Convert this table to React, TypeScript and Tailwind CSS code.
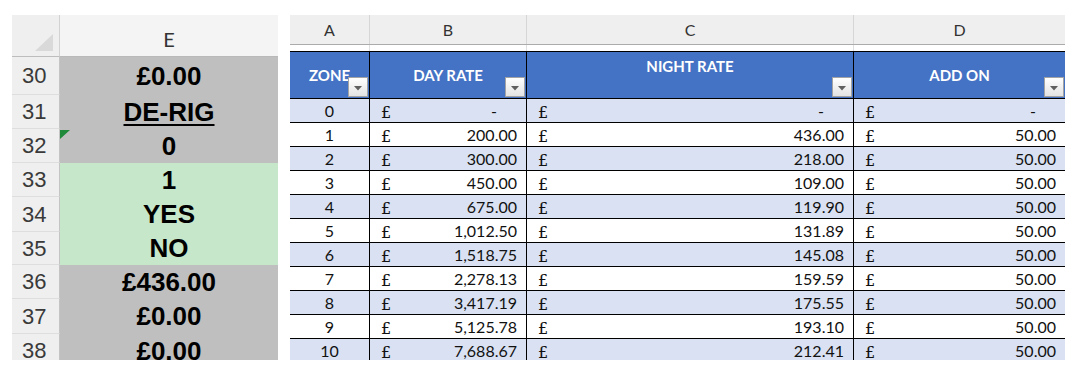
import React from 'react';

const leftRows = [
  { n: 30, text: '£0.00', bg: 'bg-[#bfbfbf]', h: 'h-[38px]' },
  { n: 31, text: 'DE-RIG', bg: 'bg-[#bfbfbf]', h: 'h-[34px]', underline: true },
  { n: 32, text: '0', bg: 'bg-[#bfbfbf]', h: 'h-[34px]', flag: true },
  { n: 33, text: '1', bg: 'bg-[#c6e7c9]', h: 'h-[34px]' },
  { n: 34, text: 'YES', bg: 'bg-[#c6e7c9]', h: 'h-[35px]' },
  { n: 35, text: 'NO', bg: 'bg-[#c6e7c9]', h: 'h-[33px]' },
  { n: 36, text: '£436.00', bg: 'bg-[#bfbfbf]', h: 'h-[34px]' },
  { n: 37, text: '£0.00', bg: 'bg-[#bfbfbf]', h: 'h-[35px]' },
  { n: 38, text: '£0.00', bg: 'bg-[#bfbfbf]', h: 'h-[34px]' },
];

const rates: [number, string | null, string | null, string | null][] = [
  [0, null, null, null],
  [1, '200.00', '436.00', '50.00'],
  [2, '300.00', '218.00', '50.00'],
  [3, '450.00', '109.00', '50.00'],
  [4, '675.00', '119.90', '50.00'],
  [5, '1,012.50', '131.89', '50.00'],
  [6, '1,518.75', '145.08', '50.00'],
  [7, '2,278.13', '159.59', '50.00'],
  [8, '3,417.19', '175.55', '50.00'],
  [9, '5,125.78', '193.10', '50.00'],
  [10, '7,688.67', '212.41', '50.00'],
];

function FilterButton() {
  return (
    <div className="absolute right-[1px] bottom-[1px] w-[20px] h-[20px] border border-[#a3a3a3] bg-gradient-to-b from-white to-[#e3e3e3] flex items-center justify-center">
      <svg width="8" height="5" viewBox="0 0 8 5" className="mt-[2px]">
        <path d="M0 0 L8 0 L4 4.5 Z" fill="#5f5f5f" />
      </svg>
    </div>
  );
}

function Money({ value, w }: { value: string | null; w: string }) {
  return (
    <div className={`${w} border-l border-black h-full flex items-center justify-between pl-[11px] pr-[9px]`}>
      <span className="font-['DejaVu_Serif',serif] text-[16px] leading-none pt-[4px]">£</span>
      {value === null ? <span className="pr-[20px]">-</span> : <span>{value}</span>}
    </div>
  );
}

function LeftSheet() {
  return (
    <div className="w-[266px] h-[345px] overflow-hidden flex flex-col">
      <div className="flex h-[42px] shrink-0">
        <div className="w-[48px] bg-[#efefef] border-r border-[#d2d2d2] border-b border-b-[#bdbdbd] flex items-end justify-end pr-[6px] pb-[5px]">
          <svg width="18" height="17" viewBox="0 0 18 17">
            <path d="M18 0 L18 17 L0 17 Z" fill="#d9d9d9" />
          </svg>
        </div>
        <div className="flex-1 bg-[#f4f4f4] border-b border-[#b9b9b9] flex items-center justify-center pt-[6px] text-[20px] text-[#333] font-['Lato',sans-serif]">
          E
        </div>
      </div>
      {leftRows.map((r) => (
        <div key={r.n} className={`flex ${r.h} shrink-0`}>
          <div className="w-[48px] bg-[#efefef] border-r border-[#c4c4c4] border-b border-b-[#dedede] flex items-center pl-[10px] text-[22px] text-[#3a3a3a] font-['Liberation_Sans',sans-serif]">
            {r.n}
          </div>
          <div
            className={`relative flex-1 ${r.bg} flex items-center justify-center text-[26px] font-bold text-black font-['Liberation_Sans',sans-serif]`}
          >
            {r.flag && (
              <svg width="10" height="9" viewBox="0 0 10 9" className="absolute left-0 top-[1px]">
                <path d="M0 0 L10 0 L0 9 Z" fill="#1f8a3a" />
              </svg>
            )}
            <span className={r.underline ? 'underline decoration-2 underline-offset-[3px]' : ''}>{r.text}</span>
          </div>
        </div>
      ))}
    </div>
  );
}

function RightSheet() {
  const cols = ['w-[79px]', 'w-[157px]', 'w-[327px]', 'w-[212px]'];
  return (
    <div className="w-[775px] h-[345px] overflow-hidden flex flex-col font-['Lato',sans-serif] text-[16px] text-[#111]">
      <div className="flex h-[30px] shrink-0 bg-[#efefef] border-b border-[#ababab] text-[#333]">
        {['A', 'B', 'C', 'D'].map((c, i) => (
          <div key={c} className={`${cols[i]} ${i > 0 ? 'border-l border-[#d6d6d6]' : ''} flex items-center justify-center`}>
            {c}
          </div>
        ))}
      </div>
      <div className="flex h-[6px] shrink-0">
        {cols.map((w, i) => (
          <div key={w} className={`${w} ${i > 0 ? 'border-l border-[#e0e0e0]' : ''}`} />
        ))}
      </div>
      <div className="flex h-[48px] shrink-0 bg-[#4472c4] border-y border-black text-white font-bold text-[15px]">
        <div className={`${cols[0]} relative flex items-center justify-center`}>
          ZONE
          <FilterButton />
        </div>
        <div className={`${cols[1]} relative border-l border-black flex items-center justify-center`}>
          DAY RATE
          <FilterButton />
        </div>
        <div className={`${cols[2]} relative border-l border-black flex items-start justify-center pt-[3px]`}>
          NIGHT RATE
          <FilterButton />
        </div>
        <div className={`${cols[3]} relative border-l border-black flex items-center justify-center`}>
          ADD ON
          <FilterButton />
        </div>
      </div>
      {rates.map(([zone, day, night, add]) => (
        <div
          key={zone}
          className={`flex h-[24px] shrink-0 border-b border-black ${zone % 2 === 0 ? 'bg-[#d9e1f2]' : 'bg-white'}`}
        >
          <div className={`${cols[0]} h-full flex items-center justify-center`}>{zone}</div>
          <Money value={day} w={cols[1]} />
          <Money value={night} w={cols[2]} />
          <Money value={zone === 0 ? null : add} w={cols[3]} />
        </div>
      ))}
    </div>
  );
}

export default function App() {
  return (
    <div className="w-[1086px] h-[378px] bg-white flex items-start pt-[15px] pl-[12px] gap-[12px]">
      <LeftSheet />
      <RightSheet />
    </div>
  );
}
